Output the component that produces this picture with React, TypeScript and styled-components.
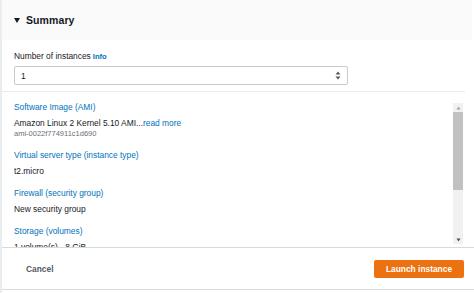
import styled, { createGlobalStyle } from "styled-components";

const GlobalStyle = createGlobalStyle`
  html, body {
    margin: 0;
    padding: 0;
    background: #ffffff;
  }
  body {
    font-family: "Liberation Sans", Arial, sans-serif;
    color: #16191f;
  }
`;

const Panel = styled.div`
  width: 474px;
  height: 293px;
  box-sizing: border-box;
  border-left: 2px solid #eaeded;
  display: flex;
  flex-direction: column;
  overflow: hidden;
`;

const Header = styled.div`
  height: 40px;
  margin-right: 2px;
  background: #fafafa;
  display: flex;
  align-items: center;
  gap: 6px;
  padding-left: 12px;
  flex-shrink: 0;
`;

const Caret = styled.span`
  width: 0;
  height: 0;
  border-left: 3px solid transparent;
  border-right: 3px solid transparent;
  border-top: 5px solid #16191f;
`;

const Title = styled.h2`
  margin: 0;
  font-size: 10.5px;
  font-weight: 700;
  letter-spacing: 0.1px;
`;

const Top = styled.div`
  padding: 10px 0 0 12px;
  flex-shrink: 0;
`;

const FieldLabel = styled.label`
  display: block;
  font-size: 8.4px;
  line-height: 12px;
  margin-bottom: 3px;
`;

const Info = styled.span`
  color: #0073bb;
  font-weight: 700;
  font-size: 7.6px;
  margin-left: 2px;
`;

const NumberBox = styled.div`
  width: 334px;
  height: 19px;
  box-sizing: border-box;
  border: 1px solid #c6cbcd;
  border-radius: 2px;
  display: flex;
  align-items: center;
  justify-content: space-between;
  padding: 0 6px 0 6px;
  font-size: 8.4px;
`;

const Divider = styled.div`
  height: 1px;
  background: #eaeded;
  margin: 6px 9px 0 0;
`;

const ScrollArea = styled.div`
  flex: 1;
  display: flex;
  min-height: 0;
  overflow: hidden;
`;

const Content = styled.div`
  flex: 1;
  padding: 9px 12px 0 12px;
`;

const Group = styled.div`
  margin-bottom: 10px;
`;

const GroupLabel = styled.div`
  color: #0073bb;
  font-size: 8.4px;
  line-height: 12px;
  margin-bottom: 4px;
`;

const Value = styled.div`
  font-size: 8.4px;
  line-height: 12px;
`;

const SubValue = styled.div`
  color: #687078;
  font-size: 7.5px;
  line-height: 10px;
  margin-bottom: 1px;
`;

const Link = styled.a`
  color: #0073bb;
  text-decoration: none;
`;

const Scrollbar = styled.div`
  width: 10px;
  margin: 11px 11px 3px 0;
  background: #f1f1f1;
  display: flex;
  flex-direction: column;
  align-items: center;
`;

const ScrollArrow = styled.div`
  height: 9px;
  width: 100%;
  display: flex;
  align-items: center;
  justify-content: center;
`;

const Thumb = styled.div`
  width: 100%;
  height: 78px;
  background: #c1c1c1;
`;

const Footer = styled.div`
  height: 43px;
  flex-shrink: 0;
  box-sizing: border-box;
  border-top: 1px solid #d5dbdb;
  border-bottom: 1px solid #d5dbdb;
  display: flex;
  align-items: center;
  justify-content: space-between;
  padding: 0 10px 0 24px;
  margin-bottom: 3px;
`;

const TextButton = styled.button`
  border: none;
  background: none;
  padding: 0;
  font-family: inherit;
  font-size: 8.4px;
  font-weight: 700;
  color: #545b64;
`;

const PrimaryButton = styled.button`
  width: 90px;
  height: 18px;
  border: none;
  border-radius: 2px;
  background: #ec7211;
  color: #ffffff;
  font-family: inherit;
  font-size: 8.4px;
  font-weight: 700;
  padding: 0;
`;

const Spinner = () => (
  <svg width="6" height="9" viewBox="0 0 6 9">
    <path d="M3 0.5 L5.5 3.5 L0.5 3.5 Z" fill="#545b64" />
    <path d="M3 8.5 L5.5 5.5 L0.5 5.5 Z" fill="#545b64" />
  </svg>
);

const Arrow = ({ up, color }: { up?: boolean; color: string }) => (
  <svg width="5" height="4" viewBox="0 0 5 4">
    <path d={up ? "M2.5 0.5 L4.5 3.5 L0.5 3.5 Z" : "M2.5 3.5 L4.5 0.5 L0.5 0.5 Z"} fill={color} />
  </svg>
);

const summary = [
  {
    label: "Software Image (AMI)",
    value: (
      <>
        Amazon Linux 2 Kernel 5.10 AMI...<Link href="#">read more</Link>
      </>
    ),
    sub: "ami-0022f774911c1d690",
  },
  { label: "Virtual server type (instance type)", value: "t2.micro" },
  { label: "Firewall (security group)", value: "New security group" },
  { label: "Storage (volumes)", value: "1 volume(s) - 8 GiB" },
];

const App = () => {
  return (
    <>
      <GlobalStyle />
      <Panel>
        <Header>
          <Caret />
          <Title>Summary</Title>
        </Header>
        <Top>
          <FieldLabel>
            Number of instances<Info>Info</Info>
          </FieldLabel>
          <NumberBox>
            <span>1</span>
            <Spinner />
          </NumberBox>
        </Top>
        <Divider />
        <ScrollArea>
          <Content>
            {summary.map((item) => (
              <Group key={item.label}>
                <GroupLabel>{item.label}</GroupLabel>
                <Value>{item.value}</Value>
                {item.sub && <SubValue>{item.sub}</SubValue>}
              </Group>
            ))}
          </Content>
          <Scrollbar>
            <ScrollArrow>
              <Arrow up color="#a3a3a3" />
            </ScrollArrow>
            <Thumb />
            <div style={{ flex: 1 }} />
            <ScrollArrow>
              <Arrow color="#505050" />
            </ScrollArrow>
          </Scrollbar>
        </ScrollArea>
        <Footer>
          <TextButton>Cancel</TextButton>
          <PrimaryButton>Launch instance</PrimaryButton>
        </Footer>
      </Panel>
    </>
  );
};

export default App;
